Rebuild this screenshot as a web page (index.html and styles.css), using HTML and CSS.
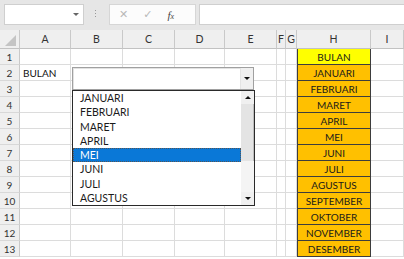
FILE: index.html
```html
<!DOCTYPE html>
<html lang="id">
<head>
    <meta charset="UTF-8">
    <title>Daftar Bulan</title>
    <link rel="stylesheet" href="styles.css">
</head>
<body>
    <!-- Baris nama sel dan rumus -->
    <div class="toolbar">
        <div class="namebox"><span class="caret"></span></div>
        <div class="grip"><i></i><i></i><i></i></div>
        <div class="fxbox">
            <span class="btn">&#x2715;</span>
            <span class="btn">&#x2713;</span>
            <span class="fx">f<small>x</small></span>
        </div>
        <div class="formula"></div>
    </div>

    <div class="sheet">
        <div class="row head">
            <span class="corner"><b></b></span><span>A</span><span>B</span><span>C</span><span>D</span><span>E</span><span>F</span><span>G</span><span>H</span><span>I</span>
        </div>
        <div class="row"><span class="num">1</span><span></span><span></span><span></span><span></span><span></span><span></span><span></span><span class="month first">BULAN</span><span></span></div>
        <div class="row"><span class="num">2</span><span>BULAN</span><span></span><span></span><span></span><span></span><span></span><span></span><span class="month">JANUARI</span><span></span></div>
        <div class="row"><span class="num">3</span><span></span><span></span><span></span><span></span><span></span><span></span><span></span><span class="month">FEBRUARI</span><span></span></div>
        <div class="row"><span class="num">4</span><span></span><span></span><span></span><span></span><span></span><span></span><span></span><span class="month">MARET</span><span></span></div>
        <div class="row"><span class="num">5</span><span></span><span></span><span></span><span></span><span></span><span></span><span></span><span class="month">APRIL</span><span></span></div>
        <div class="row"><span class="num">6</span><span></span><span></span><span></span><span></span><span></span><span></span><span></span><span class="month">MEI</span><span></span></div>
        <div class="row"><span class="num">7</span><span></span><span></span><span></span><span></span><span></span><span></span><span></span><span class="month">JUNI</span><span></span></div>
        <div class="row"><span class="num">8</span><span></span><span></span><span></span><span></span><span></span><span></span><span></span><span class="month">JULI</span><span></span></div>
        <div class="row"><span class="num">9</span><span></span><span></span><span></span><span></span><span></span><span></span><span></span><span class="month">AGUSTUS</span><span></span></div>
        <div class="row"><span class="num">10</span><span></span><span></span><span></span><span></span><span></span><span></span><span></span><span class="month">SEPTEMBER</span><span></span></div>
        <div class="row"><span class="num">11</span><span></span><span></span><span></span><span></span><span></span><span></span><span></span><span class="month">OKTOBER</span><span></span></div>
        <div class="row"><span class="num">12</span><span></span><span></span><span></span><span></span><span></span><span></span><span></span><span class="month">NOVEMBER</span><span></span></div>
        <div class="row"><span class="num">13</span><span></span><span></span><span></span><span></span><span></span><span></span><span></span><span class="month">DESEMBER</span><span></span></div>

        <!-- Combo box dan daftar pilihannya -->
        <div class="combo">
            <div class="combo-text"></div>
            <div class="combo-btn"><span class="down"></span></div>
        </div>
        <div class="list">
            <div class="items">
                <div class="item">JANUARI</div>
                <div class="item">FEBRUARI</div>
                <div class="item">MARET</div>
                <div class="item">APRIL</div>
                <div class="item selected">MEI</div>
                <div class="item">JUNI</div>
                <div class="item">JULI</div>
                <div class="item">AGUSTUS</div>
            </div>
            <div class="scroll">
                <div class="arrow"><span class="up"></span></div>
                <div class="thumb"></div>
                <div class="track"></div>
                <div class="arrow"><span class="down"></span></div>
            </div>
        </div>
    </div>
</body>
</html>
```

FILE: styles.css
```css
/* Halaman */
body {
    margin: 0;
    width: 404px;
    height: 259px;
    overflow: hidden;
    background-color: #fff;
    font-family: Lato, 'Liberation Sans', sans-serif;
    font-size: 10px;
    color: #111;
}

/* Baris atas */
.toolbar {
    display: flex;
    align-items: flex-start;
    height: 30px;
    padding: 4px 0 0 4px;
    box-sizing: border-box;
    background-color: #e6e6e6;
}

.namebox {
    width: 80px;
    height: 21px;
    box-sizing: border-box;
    background-color: #fff;
    border: 1px solid #cfcfcf;
    display: flex;
    justify-content: flex-end;
    align-items: center;
    padding-right: 4px;
}

.caret {
    width: 0;
    height: 0;
    border-left: 3px solid transparent;
    border-right: 3px solid transparent;
    border-top: 3px solid #666;
}

.grip {
    width: 3px;
    margin: 6px 0 0 11px;
    display: flex;
    flex-direction: column;
    gap: 2px;
}

.grip i {
    width: 1px;
    height: 1px;
    background-color: #999;
}

.fxbox {
    width: 87px;
    height: 21px;
    margin-left: 11px;
    box-sizing: border-box;
    background-color: #fcfcfc;
    border: 1px solid #d6d6d6;
    display: flex;
    align-items: center;
    padding-left: 9px;
    gap: 15px;
}

.btn {
    color: #b8b8b8;
    font-size: 11px;
    font-family: 'DejaVu Sans', sans-serif;
}

.fx {
    font-family: 'Liberation Serif', serif;
    font-style: italic;
    font-size: 11px;
    color: #444;
}

.fx small {
    font-size: 8px;
}

.formula {
    flex: 1;
    height: 21px;
    margin-left: 3px;
    box-sizing: border-box;
    background-color: #fff;
    border: 1px solid #cfcfcf;
    border-right: none;
}

/* Lembar kerja */
.sheet {
    position: relative;
}

.row {
    display: grid;
    grid-template-columns: 20px 51px 52px 52px 50px 52px 9px 11px 74px 33px;
    height: 16px;
}

.row > span {
    box-sizing: border-box;
    border-right: 1px solid #dcdcdc;
    border-bottom: 1px solid #dcdcdc;
    display: flex;
    align-items: center;
    padding-left: 3px;
    white-space: nowrap;
    overflow: hidden;
}

.row.head {
    height: 19px;
}

.row.head > span {
    background-color: #efefef;
    border-right-color: #c9c9c9;
    border-bottom-color: #c2c2c2;
    justify-content: center;
    padding: 0;
    color: #333;
    font-size: 10.5px;
}

.corner {
    position: relative;
}

.corner b {
    position: absolute;
    right: 3px;
    bottom: 2px;
    width: 0;
    height: 0;
    border-left: 11px solid transparent;
    border-bottom: 11px solid #c4c4c4;
}

.row > .num {
    background-color: #efefef;
    border-right-color: #c9c9c9;
    border-bottom-color: #d8d8d8;
    justify-content: center;
    padding: 0;
    color: #333;
}

.row > .month {
    background-color: #ffc000;
    border-left: 1px solid #3d3d3d;
    border-right: 1px solid #3d3d3d;
    border-bottom: 1px solid #3d3d3d;
    justify-content: center;
    padding: 0;
    color: #1a1a1a;
}

.row > .month.first {
    background-color: #ffff00;
}

/* Combo box */
.combo {
    position: absolute;
    left: 72px;
    top: 37px;
    width: 182px;
    height: 23px;
    box-sizing: border-box;
    background-color: #fff;
    border: 1px solid #a0a0a0;
    box-shadow: inset 1px 1px 0 #e2e2e2;
    display: flex;
}

.combo-text {
    flex: 1;
}

.combo-btn {
    width: 12px;
    background-color: #f0f0f0;
    border-left: 1px solid #e4e4e4;
    display: flex;
    justify-content: center;
    align-items: center;
}

.down,
.up {
    width: 0;
    height: 0;
    border-left: 3px solid transparent;
    border-right: 3px solid transparent;
}

.down {
    border-top: 3px solid #111;
}

.up {
    border-bottom: 3px solid #111;
}

.list {
    position: absolute;
    left: 72px;
    top: 60px;
    width: 183px;
    height: 116px;
    box-sizing: border-box;
    background-color: #fff;
    border: 1px solid #2a2a2a;
    display: flex;
}

.items {
    flex: 1;
}

.item {
    height: 14.25px;
    line-height: 14.25px;
    padding-left: 7px;
    font-size: 10.5px;
    color: #1a1a1a;
}

.item.selected {
    background-color: #0a78d7;
    color: #fff;
    outline: 1px dotted #555;
    outline-offset: -1px;
}

.scroll {
    width: 13px;
    background-color: #f4f4f4;
    display: flex;
    flex-direction: column;
}

.scroll .arrow {
    height: 13px;
    display: flex;
    justify-content: center;
    align-items: center;
    background-color: #f0f0f0;
}

.thumb {
    height: 57px;
    background-color: #e4e4e4;
    border-right: 1px solid #bdbdbd;
}

.track {
    flex: 1;
}
```
